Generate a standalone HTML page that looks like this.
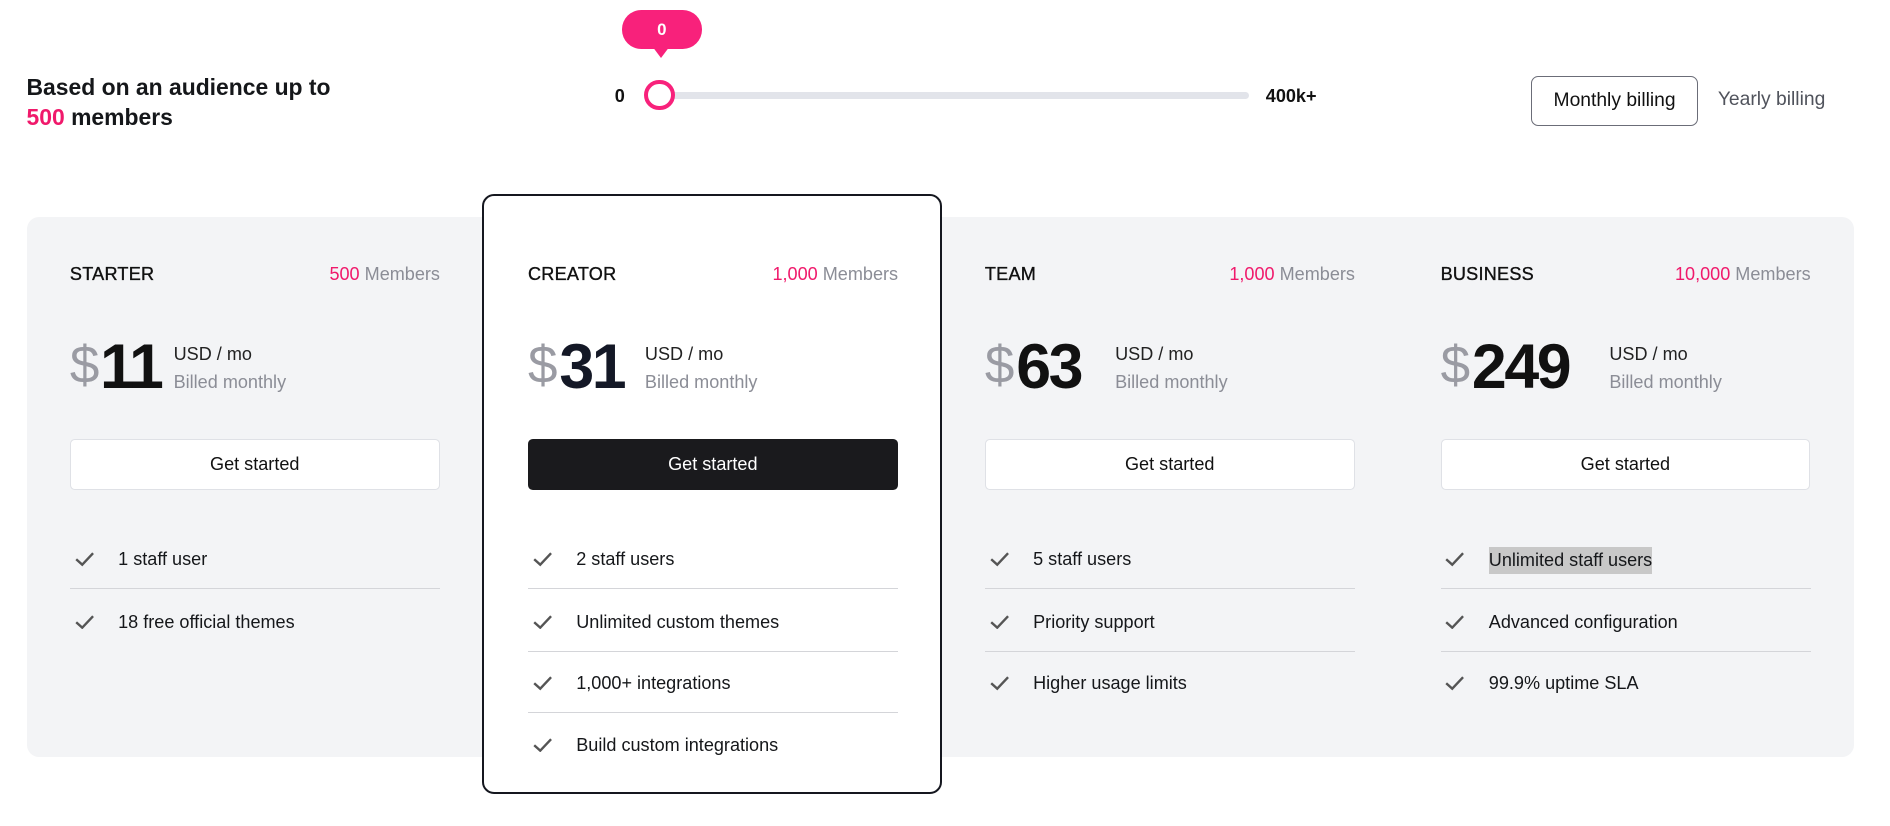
<!DOCTYPE html>
<html><head><meta charset="utf-8"><style>
html,body{margin:0;padding:0;background:#fff;overflow:hidden}
body{width:1890px;height:826px}
#w{position:relative;width:1570px;height:690px;zoom:1.2055;font-family:"Liberation Sans",sans-serif;color:#111}
.a{position:absolute}
.h{font-size:19px;font-weight:bold;line-height:25px;left:22px;top:60px;color:#15171a}
.pk{color:#f0196b}
.panel{left:22px;top:180px;width:1516px;height:448px;background:#f3f4f6;border-radius:10px}
.card{left:400px;top:161px;width:378px;height:494px;background:#fff;border:2px solid #15171f;border-radius:10px}
.col{position:absolute;top:0;width:307px}
.t{position:absolute;top:219px;font-size:15px;letter-spacing:0.2px;-webkit-text-stroke:0.3px #111}
.m{position:absolute;top:219px;right:0;font-size:15px;color:#8b8d96}
.d{position:absolute;top:279px;font-size:44px;color:#9a9ba3;line-height:50px}
.n{position:absolute;top:277px;font-size:52px;font-weight:bold;line-height:56px;letter-spacing:-2px}
.u{position:absolute;top:285px;font-size:15px;color:#222}
.b{position:absolute;top:309px;font-size:15px;color:#8b8d96}
.btn{position:absolute;top:364px;left:0;width:305px;height:41px;border:1px solid #dfe1e6;border-radius:4px;background:#fff;text-align:center;line-height:41px;font-size:15px}
.btn.k{background:#1a1a1d;color:#fff;border-color:#1a1a1d}
.f{position:absolute;left:0;width:307px;height:51px}
.f.s{border-bottom:1px solid #d4d5d9}
.f svg{position:absolute;left:4px;top:21px}
.f span{position:absolute;left:40px;top:17px;font-size:15px;color:#15171a;line-height:20px}
</style></head><body><div id="w">
<div class="a h">Based on an audience up to<br><span class="pk">500</span> members</div>
<div class="a" style="left:516px;top:8px;width:66px;height:33px;background:#f8217b;border-radius:16px;color:#fff;font-weight:bold;font-size:14px;text-align:center;line-height:33px">0</div>
<div class="a" style="left:541px;top:38px;width:0;height:0;border-left:8px solid transparent;border-right:8px solid transparent;border-top:10px solid #f8217b"></div>
<div class="a" style="left:510px;top:71px;font-size:15px;font-weight:bold">0</div>
<div class="a" style="left:548px;top:76px;width:488px;height:6px;background:#e2e4ea;border-radius:3px"></div>
<div class="a" style="left:534px;top:66px;width:19px;height:19px;border:4px solid #f8217b;border-radius:50%;background:#fff"></div>
<div class="a" style="left:1050px;top:71px;font-size:15px;font-weight:bold">400k+</div>
<div class="a" style="left:1270px;top:63px;width:137px;height:40px;border:1px solid #6b6d78;border-radius:6px;text-align:center;line-height:40px;font-size:16px">Monthly billing</div>
<div class="a" style="left:1425px;top:63px;line-height:40px;font-size:16px;color:#50535c">Yearly billing</div>
<div class="a panel"></div>
<div class="a card"></div>

<div class="col" style="left:58px">
<div class="t">STARTER</div><div class="m"><span class="pk">500</span> Members</div>
<div class="d">$</div><div class="n" style="left:25px">11</div>
<div class="u" style="left:86px">USD / mo</div><div class="b" style="left:86px">Billed monthly</div>
<div class="btn">Get started</div>
<div class="f s" style="top:437px"><svg width="16" height="12" viewBox="0 0 16 12"><path d="M1 6l5 4.5L15 1" fill="none" stroke="#555" stroke-width="2"/></svg><span>1 staff user</span></div>
<div class="f" style="top:489px"><svg width="16" height="12" viewBox="0 0 16 12"><path d="M1 6l5 4.5L15 1" fill="none" stroke="#555" stroke-width="2"/></svg><span>18 free official themes</span></div>
</div>

<div class="col" style="left:438px">
<div class="t">CREATOR</div><div class="m"><span class="pk">1,000</span> Members</div>
<div class="d">$</div><div class="n" style="left:26px;color:#141826">31</div>
<div class="u" style="left:97px">USD / mo</div><div class="b" style="left:97px">Billed monthly</div>
<div class="btn k">Get started</div>
<div class="f s" style="top:437px"><svg width="16" height="12" viewBox="0 0 16 12"><path d="M1 6l5 4.5L15 1" fill="none" stroke="#555" stroke-width="2"/></svg><span>2 staff users</span></div>
<div class="f s" style="top:489px"><svg width="16" height="12" viewBox="0 0 16 12"><path d="M1 6l5 4.5L15 1" fill="none" stroke="#555" stroke-width="2"/></svg><span>Unlimited custom themes</span></div>
<div class="f s" style="top:540px"><svg width="16" height="12" viewBox="0 0 16 12"><path d="M1 6l5 4.5L15 1" fill="none" stroke="#555" stroke-width="2"/></svg><span>1,000+ integrations</span></div>
<div class="f" style="top:591px"><svg width="16" height="12" viewBox="0 0 16 12"><path d="M1 6l5 4.5L15 1" fill="none" stroke="#555" stroke-width="2"/></svg><span>Build custom integrations</span></div>
</div>

<div class="col" style="left:817px">
<div class="t">TEAM</div><div class="m"><span class="pk">1,000</span> Members</div>
<div class="d">$</div><div class="n" style="left:26px">63</div>
<div class="u" style="left:108px">USD / mo</div><div class="b" style="left:108px">Billed monthly</div>
<div class="btn">Get started</div>
<div class="f s" style="top:437px"><svg width="16" height="12" viewBox="0 0 16 12"><path d="M1 6l5 4.5L15 1" fill="none" stroke="#555" stroke-width="2"/></svg><span>5 staff users</span></div>
<div class="f s" style="top:489px"><svg width="16" height="12" viewBox="0 0 16 12"><path d="M1 6l5 4.5L15 1" fill="none" stroke="#555" stroke-width="2"/></svg><span>Priority support</span></div>
<div class="f" style="top:540px"><svg width="16" height="12" viewBox="0 0 16 12"><path d="M1 6l5 4.5L15 1" fill="none" stroke="#555" stroke-width="2"/></svg><span>Higher usage limits</span></div>
</div>

<div class="col" style="left:1195px">
<div class="t">BUSINESS</div><div class="m"><span class="pk">10,000</span> Members</div>
<div class="d">$</div><div class="n" style="left:26px">249</div>
<div class="u" style="left:140px">USD / mo</div><div class="b" style="left:140px">Billed monthly</div>
<div class="btn">Get started</div>
<div class="f s" style="top:437px"><svg width="16" height="12" viewBox="0 0 16 12"><path d="M1 6l5 4.5L15 1" fill="none" stroke="#555" stroke-width="2"/></svg><span style="background:#c8c8c8;padding:1px 0">Unlimited staff users</span></div>
<div class="f s" style="top:489px"><svg width="16" height="12" viewBox="0 0 16 12"><path d="M1 6l5 4.5L15 1" fill="none" stroke="#555" stroke-width="2"/></svg><span>Advanced configuration</span></div>
<div class="f" style="top:540px"><svg width="16" height="12" viewBox="0 0 16 12"><path d="M1 6l5 4.5L15 1" fill="none" stroke="#555" stroke-width="2"/></svg><span>99.9% uptime SLA</span></div>
</div>
</div></body></html>
